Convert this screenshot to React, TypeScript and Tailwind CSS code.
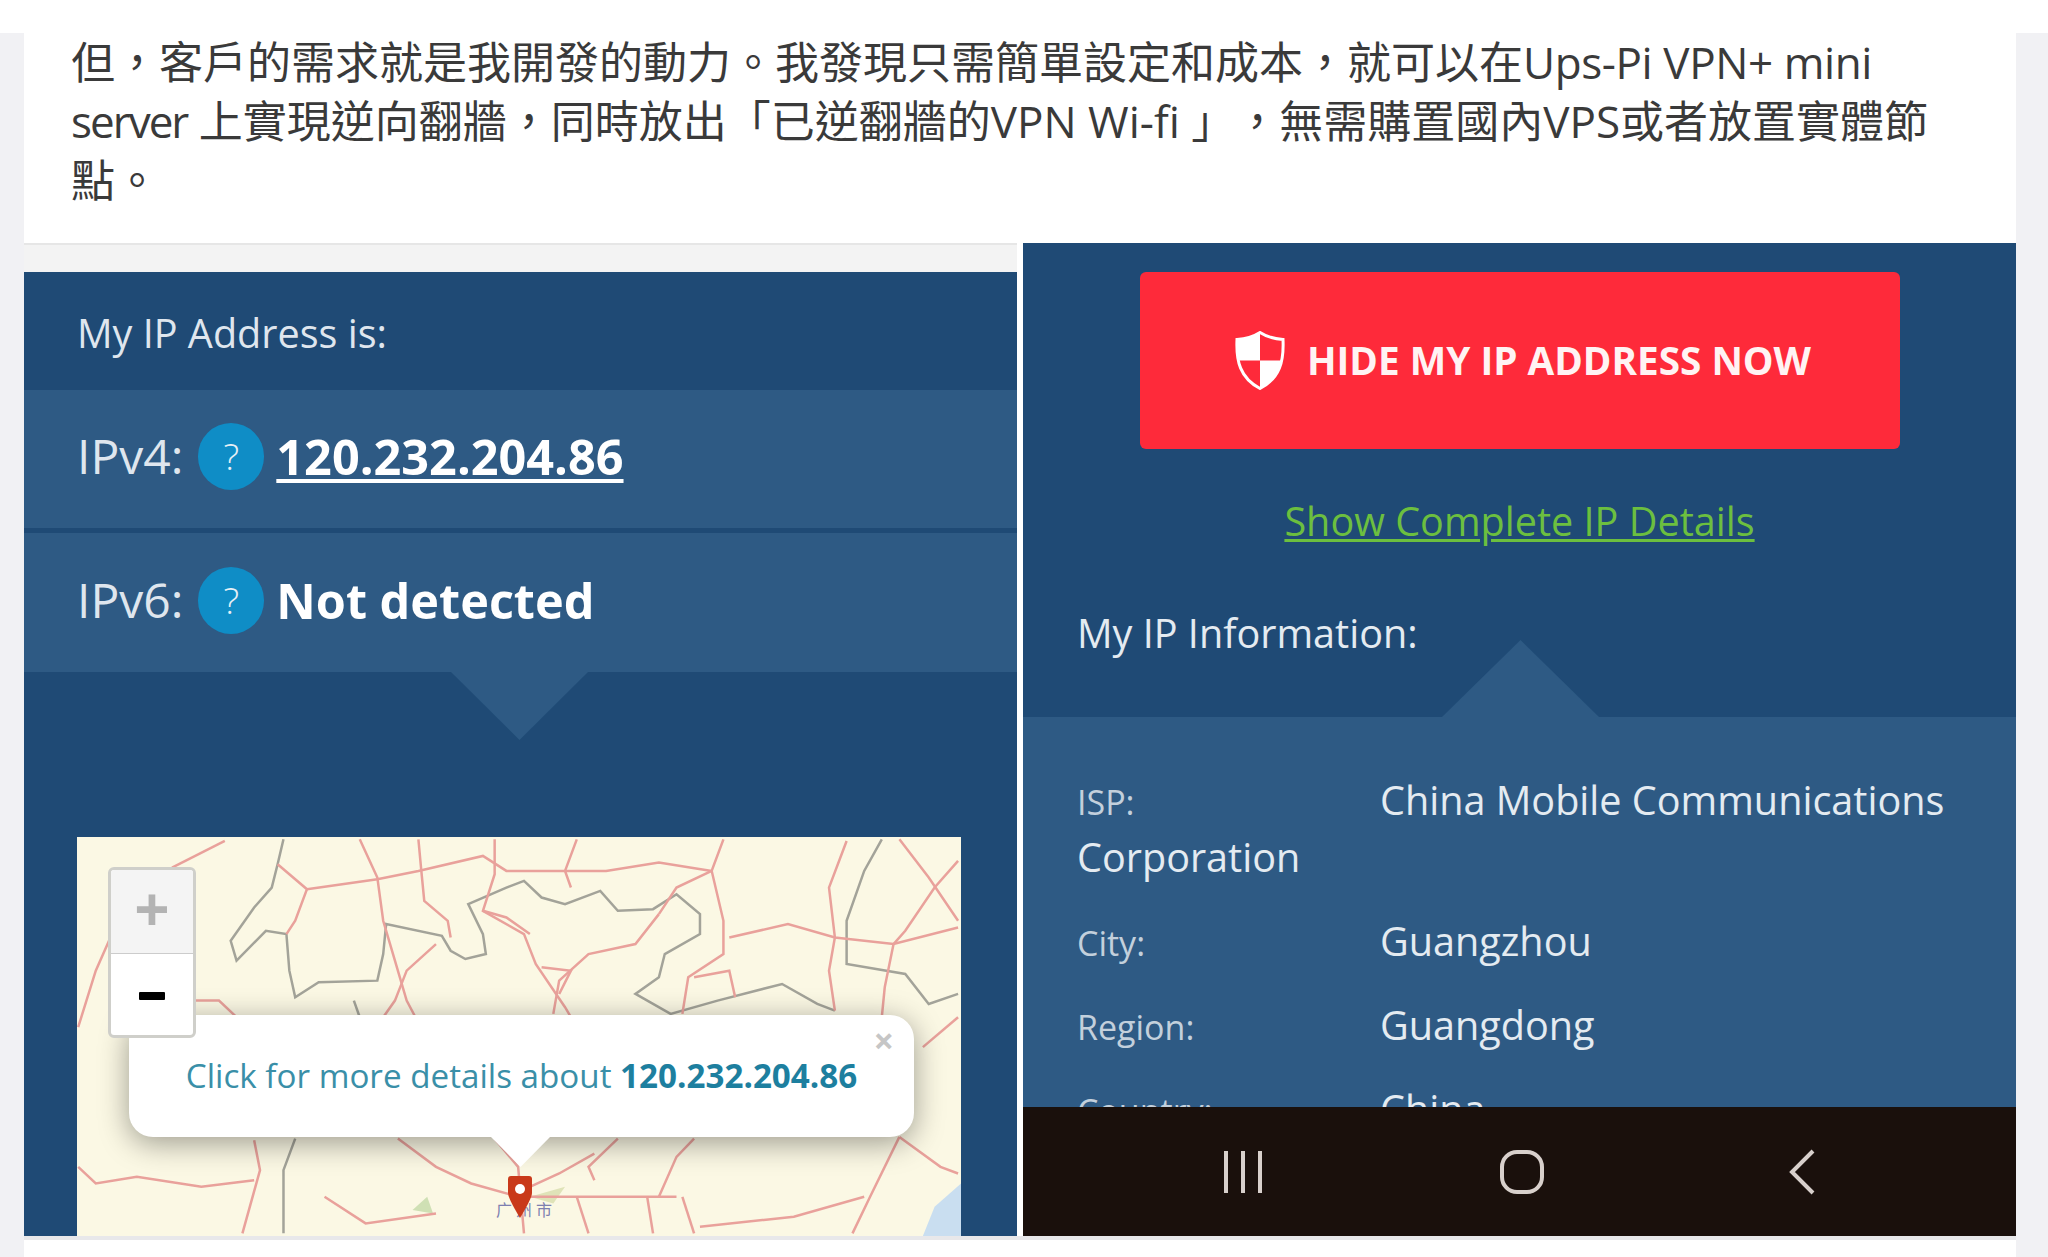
const roads = [
  "420,205 540,175 610,150 720,105 760,150 860,150 930,150 1020,125 1110,150",
  "370,130 420,205 400,300 385,340",
  "510,55 540,170 550,300 570,420 590,540 605,590",
  "610,55 615,150 620,240 660,300 665,350",
  "740,55 740,160 720,270 790,340 810,430 860,560 870,590",
  "190,140 280,60",
  "880,55 860,150 870,200",
  "1130,55 1110,150 1130,300 1130,400 1070,470 1060,580",
  "1140,350 1240,310 1320,350 1420,370 1530,320",
  "1340,60 1310,200 1320,350 1310,450 1320,570",
  "1420,370 1405,500 1400,590",
  "1430,55 1480,170 1530,300",
  "1530,120 1490,200 1440,330 1420,370",
  "820,440 870,450 850,520",
  "1020,280 980,370 900,400 850,480 840,580",
  "640,370 590,450 570,540 550,590",
  "30,620 60,450 85,350",
  "230,540 270,540 300,590",
  "1530,590 1470,680",
  "1080,470 1140,450 1150,530",
  "1110,150 1050,200 1020,280",
  "720,270 760,290 800,340",
  "30,1040 60,1090 130,1070 240,1100 330,1080",
  "330,960 340,1050 310,1240",
  "1430,950 1500,1040 1530,1060",
  "1430,950 1380,1130 1350,1240",
  "1080,955 1050,1010 1020,1130",
  "575,955 640,1040 700,1090 780,1130 880,1130 1050,1130",
  "910,1000 850,1060 800,1100",
  "900,1240 880,1130",
  "1000,1130 1010,1240",
  "1060,1130 1080,1240",
  "1090,1220 1250,1190 1370,1130",
  "950,955 900,1040 910,1080",
  "740,955 780,1040 790,1240",
  "450,1130 520,1210 640,1180",
];

const borders = [
  "380,55 370,130 360,200 330,260 290,360 300,420 350,330 385,340 390,450 400,530 440,485 540,480 550,400 555,310 650,345 665,390 690,415 725,400 720,340 695,250 760,200 790,180 820,230 860,250 920,210 950,270 1010,265 1050,220 1090,280 1090,340 1030,400 1020,470 980,520 1040,580 1120,540 1230,490 1290,550 1320,570",
  "1400,55 1370,150 1340,300 1340,430 1440,460 1480,550 1530,520",
  "500,540 510,590",
  "400,955 380,1050 380,1240",
];

function MapLines() {
  return (
    <svg className="block h-full w-full blur-[0.7px]" viewBox="28 48 1507 1200" preserveAspectRatio="none">
      <path d="M1535 1090 L1490 1160 L1470 1248 L1535 1248 Z" fill="#c9def0" />
      <path d="M600 1170 L625 1130 L635 1180 Z" fill="#cfe0b4" />
      <path d="M800 1130 L860 1100 L840 1150 Z" fill="#dfe3b8" />
      {borders.map((points) => (
        <polyline key={points} points={points} fill="none" stroke="#a3a399" strokeWidth="2.5" vectorEffect="non-scaling-stroke" />
      ))}
      {roads.map((points) => (
        <polyline key={points} points={points} fill="none" stroke="#e9a19b" strokeWidth="2.5" vectorEffect="non-scaling-stroke" />
      ))}
    </svg>
  );
}

function ShieldIcon() {
  return (
    <svg width="50" height="59" viewBox="0 0 50 59">
      <path d="M25 1.5 C32 6 40 8 48 8.5 C49 30 45 47 25 57.5 C5 47 1 30 2 8.5 C10 8 18 6 25 1.5 Z" fill="#fe2a3a" stroke="#fff" strokeWidth="3" />
      <path d="M25 2 C18 6 10 8 2 8.5 C1.6 16 2 23 3.5 29.5 L25 29.5 Z" fill="#fff" />
      <path d="M25 29.5 L46.5 29.5 C43.5 41 37 50.5 25 57 Z" fill="#fff" />
    </svg>
  );
}

function HelpBadge() {
  return (
    <span className="ml-[15px] mr-[12px] flex h-[67px] w-[66px] shrink-0 items-center justify-center rounded-full bg-[#0f8dc6] text-[37px] font-light text-[#e6f0f6]">
      ?
    </span>
  );
}

function InfoRow({ label, value, last }: { label: string; value: string; last?: boolean }) {
  return (
    <p className={`text-[39.6px] leading-[57px] text-[#e4ebf1] ${last ? "" : "mb-[27px]"}`}>
      <span className="inline-block w-[303px] text-[34px] leading-none text-[#c3d0dc]">{label}</span>
      {value}
    </p>
  );
}

export default function App() {
  return (
    <div className="flex h-[1257px] w-[2048px] flex-col overflow-hidden bg-white font-['Open_Sans','Noto_Sans_CJK_TC',sans-serif]">
      <div className="h-[33px] shrink-0 bg-white" />
      <div className="flex min-h-0 flex-1 bg-[#f1f1f4]">
        <div className="w-[24px] shrink-0" />
        <div className="flex w-[1992px] flex-col bg-white">
          <div className="h-[210px] shrink-0 pl-[47px] pr-[40px]">
            <p className="text-[44px] leading-[59px] text-[#3a3a3a] [text-spacing-trim:space-all]">
              但，客戶的需求就是我開發的動力。我發現只需簡單設定和成本，就可以在<span className="tracking-[-0.4px]">Ups-Pi VPN+ mini</span> <span className="tracking-[-2px]">server</span> 上實現逆向翻牆，同時放出「已逆翻牆的VPN Wi-fi 」，無需購置國內VPS或者放置實體節點。
            </p>
          </div>

          <div className="flex h-[993px] shrink-0 gap-[6px]">
            {/* left phone shot */}
            <div className="flex w-[993px] flex-col">
              <div className="h-[29px] shrink-0 border-t-2 border-[#e6e6e6] bg-[#f3f3f3]" />
              <div className="flex min-h-0 flex-1 flex-col bg-[#1f4a75]">
                <div className="flex h-[118px] shrink-0 items-center pl-[53px] pt-[6px] text-[39.6px] text-[#dfe6ee]">My IP Address is:</div>
                <div className="flex h-[138px] shrink-0 items-center bg-[#2e5a84] pb-[6px] pl-[53px] text-[48px] text-[#dfe6ee]">
                  IPv4:
                  <HelpBadge />
                  <span className="text-[48.6px] font-bold text-white underline decoration-[4px] underline-offset-[4px]">120.232.204.86</span>
                </div>
                <div className="mt-[5px] flex h-[139px] shrink-0 items-center bg-[#2e5a84] pb-[5px] pl-[53px] text-[48px] text-[#dfe6ee]">
                  IPv6:
                  <HelpBadge />
                  <span className="text-[48.6px] font-bold text-white">Not detected</span>
                </div>
                <div className="relative h-[165px] shrink-0">
                  <div className="absolute left-[427px] top-0 h-[68px] w-[137px] bg-[#2e5a84] [clip-path:polygon(0_0,100%_0,50%_100%)]" />
                </div>
                <div className="relative ml-[53px] h-[399px] w-[884px] overflow-hidden bg-[#fbf8e4]">
                  <MapLines />
                  {/* popup */}
                  <div className="absolute left-[52px] top-[178px] flex h-[122px] w-[785px] items-center justify-center rounded-[24px] bg-white text-[33.2px] text-[#3a8fa8] shadow-[0_6px_30px_rgba(0,0,0,0.38)]">
                    <span>
                      Click for more details about <span className="font-bold text-[#1d7f9f]">120.232.204.86</span>
                    </span>
                    <span className="absolute right-[20px] top-[8px] text-[36px] font-bold leading-none text-[#c6c6c6]">×</span>
                  </div>
                  <div className="absolute left-[414px] top-[300px] h-[30px] w-[59px] bg-white [clip-path:polygon(0_0,100%_0,50%_100%)]" />
                  {/* zoom control */}
                  <div className="absolute left-[31px] top-[30px] flex h-[171px] w-[88px] flex-col overflow-hidden rounded-[6px] border-[3px] border-[#cfcfca] bg-white">
                    <div className="flex h-[84px] items-center justify-center border-b border-[#cccccc] bg-[#f4f4f4] pb-[8px] text-[62px] font-bold leading-none text-[#b3b3b3]">+</div>
                    <div className="flex flex-1 items-center justify-center pt-[2px]">
                      <div className="h-[8px] w-[26px] rounded-[1px] bg-black" />
                    </div>
                  </div>
                  {/* marker */}
                  <span className="absolute left-[419px] top-[365px] text-[16px] leading-none tracking-[4px] text-[#7d7fb0]">广州市</span>
                  <svg className="absolute left-[429px] top-[339px]" width="28" height="42" viewBox="0 0 28 42">
                    <path d="M2 3 Q2 0 5 0 L23 0 Q26 0 26 3 L26 17 Q26 22 14 42 Q2 22 2 17 Z" fill="#c9391a" />
                    <circle cx="14" cy="13" r="5" fill="#ffffff" />
                  </svg>
                </div>
              </div>
            </div>

            {/* right phone shot */}
            <div className="flex w-[993px] flex-col bg-[#1f4a75]">
              <div className="shrink-0 pt-[29px]">
                <div className="mx-auto flex h-[177px] w-[760px] items-center justify-center gap-[22px] rounded-[6px] bg-[#fe2a3a] pl-[7px]">
                  <ShieldIcon />
                  <span className="text-[38.7px] font-bold text-[#fff3f3]">HIDE MY IP ADDRESS NOW</span>
                </div>
              </div>
              <div className="flex h-[146px] shrink-0 items-center justify-center">
                <span className="text-[39.6px] text-[#6cbf3f] underline underline-offset-[3px]">Show Complete IP Details</span>
              </div>
              <div className="relative h-[122px] shrink-0 pl-[54px] text-[39.6px] leading-[76px] text-[#e4ebf1]">
                My IP Information:
                <div className="absolute bottom-0 left-[419px] h-[77px] w-[157px] bg-[#2e5a84] [clip-path:polygon(50%_0,100%_100%,0_100%)]" />
              </div>
              <div className="min-h-0 flex-1 overflow-hidden bg-[#2e5a84] pl-[54px] pr-[48px] pt-[55px]">
                <InfoRow label="ISP:" value="China Mobile Communications Corporation" />
                <InfoRow label="City:" value="Guangzhou" />
                <InfoRow label="Region:" value="Guangdong" />
                <InfoRow label="Country:" value="China" last />
              </div>
              <div className="flex h-[129px] shrink-0 items-center bg-[#1a100c]">
                <svg className="ml-[200px]" width="40" height="44" viewBox="0 0 40 44" fill="none" stroke="#d8d0cc" strokeWidth="4">
                  <path d="M3 1V43M20 1V43M37 1V43" />
                </svg>
                <svg className="ml-[236px]" width="46" height="46" viewBox="0 0 46 46" fill="none" stroke="#d8d0cc" strokeWidth="4">
                  <rect x="3" y="3" width="40" height="40" rx="15" />
                </svg>
                <svg className="ml-[243px]" width="28" height="46" viewBox="0 0 28 46" fill="none" stroke="#d8d0cc" strokeWidth="4">
                  <path d="M25 2L4 23L25 44" />
                </svg>
              </div>
            </div>
          </div>

          <div className="flex-1 border-t-4 border-[#e8e8ea] bg-white" />
        </div>
        <div className="flex-1" />
      </div>
    </div>
  );
}
